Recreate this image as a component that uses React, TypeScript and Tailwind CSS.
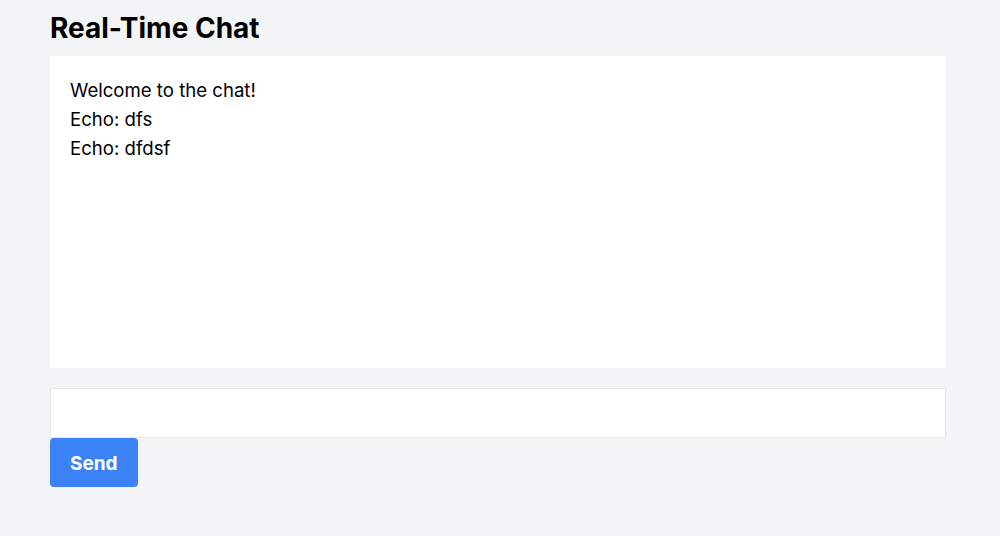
import React, { useState } from 'react';

const App: React.FC = () => {
  const [messages, setMessages] = useState<string[]>([
    'Welcome to the chat!',
    'Echo: dfs',
    'Echo: dfdsf',
  ]);
  const [text, setText] = useState('');

  const send = () => {
    if (!text.trim()) return;
    setMessages((m) => [...m, 'Echo: ' + text]);
    setText('');
  };

  return (
    <div className="min-h-screen bg-[#f3f4f6] font-['Inter',sans-serif] text-black">
      <div className="max-w-[946px] pl-[50px] pt-[10px]">
        <h1 className="text-[28px] leading-[36px] font-bold mb-[10px]">Real-Time Chat</h1>
        <div className="bg-white h-[312px] p-[20px] overflow-y-auto">
          {messages.map((msg, i) => (
            <p key={i} className="text-[18.6px] leading-[29px]">{msg}</p>
          ))}
        </div>
        <input
          value={text}
          onChange={(e) => setText(e.target.value)}
          onKeyDown={(e) => e.key === 'Enter' && send()}
          className="mt-[20px] block w-full h-[50px] bg-white border border-[#e5e7eb] px-[10px] text-[18px] outline-none"
        />
        <button
          onClick={send}
          className="block h-[49px] px-[20px] pt-[3px] bg-[#3b82f6] text-white text-[19px] font-bold rounded-[4px]"
        >
          Send
        </button>
      </div>
    </div>
  );
};

export default App;
